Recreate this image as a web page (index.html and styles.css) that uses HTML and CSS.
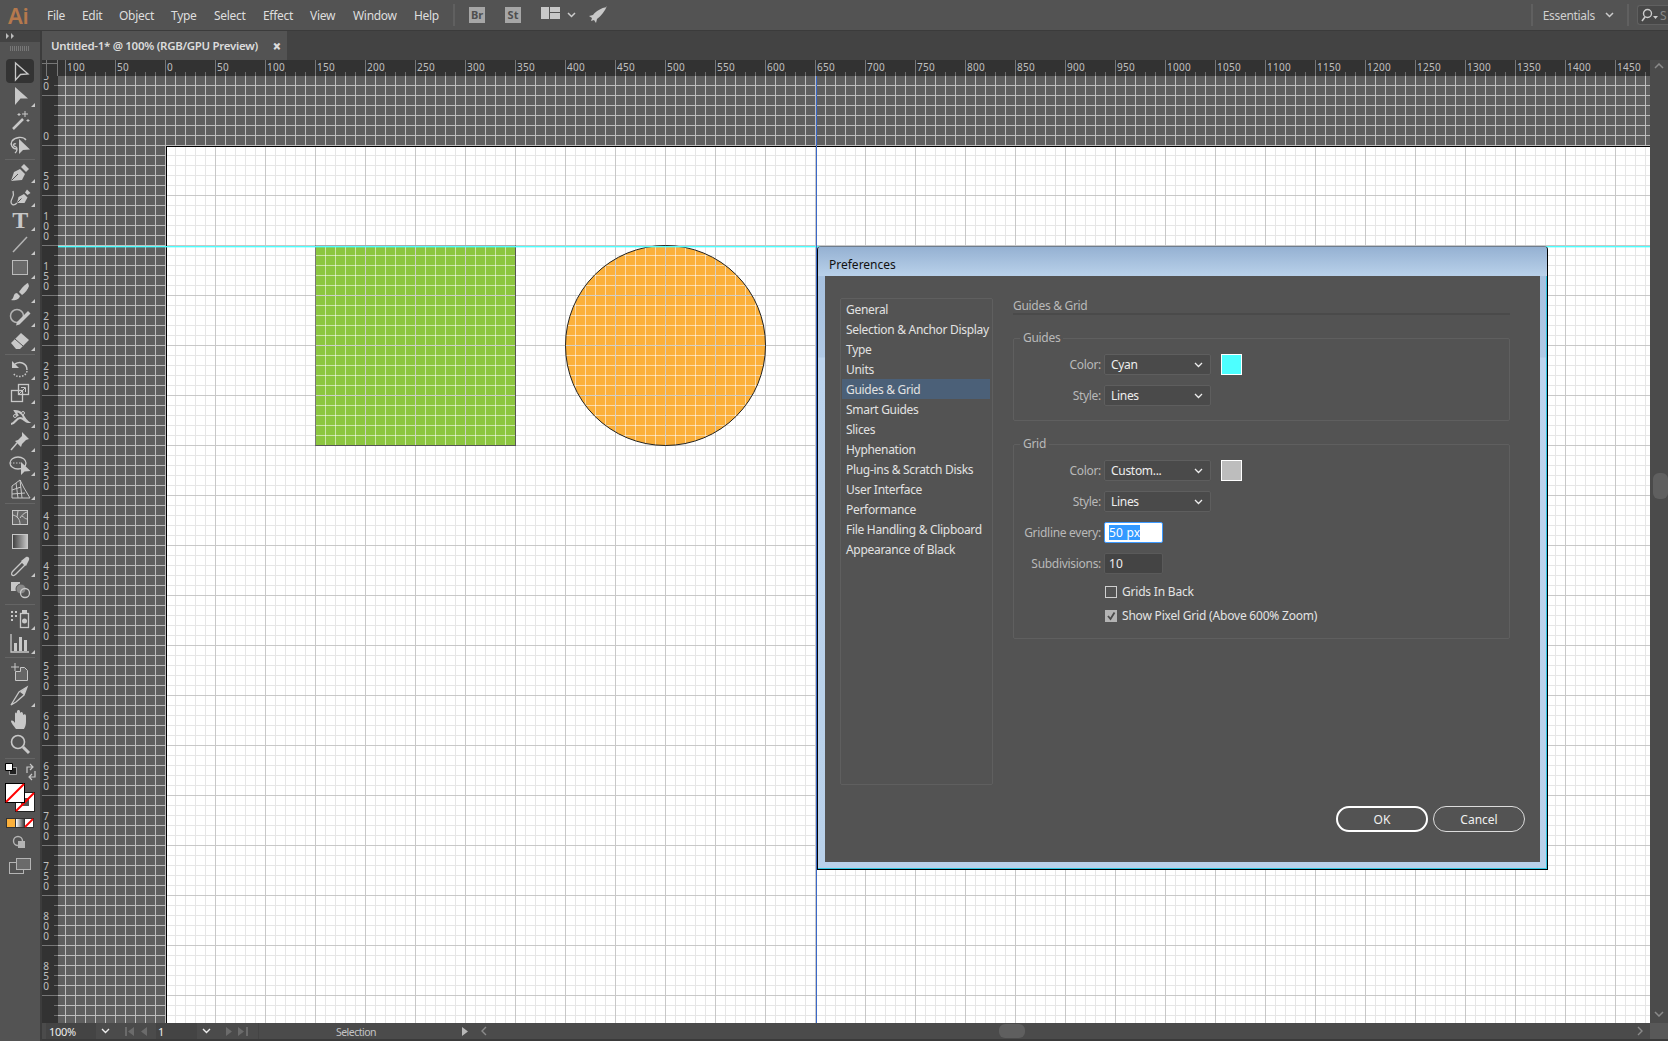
FILE: index.html
```html
<!DOCTYPE html>
<html lang="en">
<head>
    <meta charset="UTF-8">
    <title>Adobe Illustrator - Preferences</title>
    <link rel="stylesheet" href="styles.css">
</head>
<body>
    <div class="menubar">
        <span class="logo">Ai</span>
        <nav class="menu">
            <span class="menu-file">File</span>
            <span class="menu-edit">Edit</span>
            <span class="menu-object">Object</span>
            <span class="menu-type">Type</span>
            <span class="menu-select">Select</span>
            <span class="menu-effect">Effect</span>
            <span class="menu-view">View</span>
            <span class="menu-window">Window</span>
            <span class="menu-help">Help</span>
        </nav>
        <span class="bar-sep"></span>
        <span class="app-badge">Br</span>
        <span class="app-badge">St</span>
        <svg class="layout-icon" width="19" height="12" viewBox="0 0 19 12"><path d="M0 0h8v12H0zM9 0h10v5H9zM9 6h10v6H9z" fill="#c8c8c8"/></svg>
        <svg class="chev bar-chev" width="9" height="6" viewBox="0 0 9 6"><path d="M1 1l3.5 3.5L8 1" fill="none" stroke="#ccc" stroke-width="1.5"/></svg>
        <svg class="rocket" width="20" height="18" viewBox="0 0 20 18"><path d="M19 1C13 2 8 5 5 9l-4 1 3 2-1 3 3-1 2 3 1-4c4-3 8-8 10-13z" fill="#c8c8c8"/></svg>
        <span class="bar-spacer"></span>
        <span class="bar-sep"></span>
        <span class="workspace">Essentials</span>
        <svg class="chev" width="9" height="6" viewBox="0 0 9 6"><path d="M1 1l3.5 3.5L8 1" fill="none" stroke="#ccc" stroke-width="1.5"/></svg>
        <span class="bar-sep sep-search"></span>
        <div class="search">
            <svg width="18" height="14" viewBox="0 0 18 14"><circle cx="7.500" cy="5.500" r="4" fill="none" stroke="#ccc" stroke-width="1.400"/><path d="M5 9l-3 4" stroke="#ccc" stroke-width="1.500"/><path d="M13 8h5l-2.500 3z" fill="#ccc"/></svg>
            <span>S</span>
        </div>
    </div>

    <div class="main">
        <aside class="toolbar">
            <div class="toolbar-head">
                <svg width="9" height="6" viewBox="0 0 9 6"><path d="M0 0l3 3-3 3zM5 0l3 3-3 3z" fill="#bbb"/></svg>
            </div>
            <div class="toolbar-grip"></div>

            <div class="tool-group group-a">
                <div class="tool active"><svg width="24" height="24" viewBox="0 0 24 24"><path d="M7.500 4v17l5-5.500 7.500-.5z" fill="none" stroke="#c8c8c8" stroke-width="1.300"/></svg></div>
                <div class="tool more"><svg width="24" height="24" viewBox="0 0 24 24"><path d="M7 3v18l5.500-6.500H20z" fill="#c8c8c8"/></svg></div>
                <div class="tool"><svg width="24" height="24" viewBox="0 0 24 24"><path d="M5 21l10-10" stroke="#c8c8c8" stroke-width="2.500"/><path d="M17 3v6M14 6h6M11 5v3M9.500 6.500h3M20 11v3M18.500 12.500h3" stroke="#c8c8c8"/></svg></div>
                <div class="tool"><svg width="24" height="24" viewBox="0 0 24 24"><path d="M9 17C4 17 2 12 4 9c3-4 11-5 14-1" fill="none" stroke="#c8c8c8" stroke-width="1.300"/><path d="M8 12c-2-1-3 1-2 2s3 0 3 3-1 3-2 4" fill="none" stroke="#c8c8c8" stroke-width="1.300"/><path d="M11 7v15l4-4 7-.5z" fill="#c8c8c8"/></svg></div>
            </div>
            <div class="tool-sep sep-tight"></div>

            <div class="tool-group">
                <div class="tool more"><svg width="24" height="24" viewBox="0 0 24 24"><path d="M3 21l3-9 6-3 5 5-3 6z" fill="#c8c8c8"/><path d="M3.500 20.500L10 14" stroke="#535353"/><path d="M13 7l3-3 5 5-3 3z" fill="#c8c8c8"/></svg></div>
                <div class="tool more"><svg width="24" height="24" viewBox="0 0 24 24"><path d="M9 19l1.500-6 5.500-3 3.500 3.500-3 5.500z" fill="#c8c8c8"/><path d="M9.500 18.500l4-4" stroke="#535353"/><path d="M17 8.500l2-3 3.500 3.500-3 2z" fill="#c8c8c8"/><path d="M9 19c-3 3-6 2-6-1 0-4 4-5 2-11" fill="none" stroke="#c8c8c8" stroke-width="1.300"/></svg></div>
                <div class="tool more"><span class="tool-type">T</span></div>
                <div class="tool more"><svg width="24" height="24" viewBox="0 0 24 24"><path d="M5 20L19 5" stroke="#b4b4b4" stroke-width="1.500"/></svg></div>
                <div class="tool more"><svg width="24" height="24" viewBox="0 0 24 24"><rect x="4.500" y="4.500" width="15" height="14" fill="#696969" stroke="#bbb"/></svg></div>
                <div class="tool more"><svg width="24" height="24" viewBox="0 0 24 24"><path d="M20 3c-3 1-7 6-9 9l3 3c3-2 6-6 7-9z" fill="#c8c8c8"/><path d="M9 13c-3 0-3 3-4 5-.5 1-2 2-2 2 3 1 8 0 9-4z" fill="#c8c8c8"/></svg></div>
                <div class="tool more"><svg width="24" height="24" viewBox="0 0 24 24"><circle cx="9" cy="12" r="6.500" fill="none" stroke="#b4b4b4" stroke-width="1.500"/><path d="M9 18L20 7l2.500 2.500-11 11-3.500 1z" fill="#c8c8c8"/></svg></div>
                <div class="tool more"><svg width="24" height="24" viewBox="0 0 24 24"><path d="M3 15L13 5l8 7-9 9H8z" fill="#c8c8c8"/><path d="M7 11l8 7" stroke="#535353"/></svg></div>
            </div>
            <div class="tool-sep"></div>

            <div class="tool-group">
                <div class="tool more"><svg width="24" height="24" viewBox="0 0 24 24"><path d="M7 7c5-3 12-1 12 6" fill="none" stroke="#c8c8c8" stroke-width="1.500"/><path d="M19 14c-1 6-10 8-14 2" fill="none" stroke="#c8c8c8" stroke-width="1.500" stroke-dasharray="1.500 1.500"/><path d="M4 4v7h7z" fill="#c8c8c8"/></svg></div>
                <div class="tool more"><svg width="24" height="24" viewBox="0 0 24 24"><rect x="3.500" y="9.500" width="11" height="11" fill="none" stroke="#c8c8c8" stroke-width="1.300"/><rect x="10.500" y="3.500" width="10" height="10" fill="none" stroke="#c8c8c8" stroke-width="1.300"/><path d="M11 13l6-6M13 6.500h4.500V11" fill="none" stroke="#c8c8c8"/></svg></div>
                <div class="tool more"><svg width="24" height="24" viewBox="0 0 24 24"><path d="M3 19c4 0 5-6 9-6s5 4 8 4c-3-2-4-5-6-8-2-2-5-3-7-3l3 5" fill="none" stroke="#c8c8c8" stroke-width="2"/><circle cx="7" cy="11" r="1.500" fill="#535353" stroke="#c8c8c8"/><circle cx="15" cy="8" r="1.500" fill="#535353" stroke="#c8c8c8"/></svg></div>
                <div class="tool more"><svg width="24" height="24" viewBox="0 0 24 24"><path d="M14 3l7 7-3 1-4 4-1 3-6-6 3-1 4-4z" fill="#c8c8c8"/><path d="M9 14l-6 7" stroke="#c8c8c8" stroke-width="1.500"/></svg></div>
                <div class="tool more"><svg width="24" height="24" viewBox="0 0 24 24"><ellipse cx="10" cy="10" rx="8" ry="6" fill="none" stroke="#c8c8c8" stroke-width="1.300"/><path d="M2 10h12" stroke="#c8c8c8" stroke-dasharray="1.500 1.500"/><path d="M13 9v13l3.500-3.500 6-.5z" fill="#c8c8c8"/></svg></div>
                <div class="tool more"><svg width="24" height="24" viewBox="0 0 24 24"><path d="M4 21V9l8-6 4 8 6 10zM4 13l9-3M4 17l13-1M8 6l2 15M12 3l2 18" fill="none" stroke="#c8c8c8"/></svg></div>
            </div>
            <div class="tool-sep"></div>

            <div class="tool-group">
                <div class="tool"><svg width="24" height="24" viewBox="0 0 24 24"><rect x="4.500" y="4.500" width="15" height="14" fill="#666" stroke="#c8c8c8"/><path d="M12 18c0-5-3-8-7-9M12 12c2-3 4-5 7-6M9 11c0-2 1-4 1-6M14 10c2 1 3 3 5 3" fill="none" stroke="#c8c8c8"/></svg></div>
                <div class="tool"><svg width="24" height="24" viewBox="0 0 24 24"><defs><linearGradient id="toolGradient"><stop offset="0" stop-color="#3d3d3d"/><stop offset="1" stop-color="#c8c8c8"/></linearGradient></defs><rect x="4.500" y="4.500" width="15" height="14" fill="url(#toolGradient)" stroke="#c8c8c8"/></svg></div>
                <div class="tool more"><svg width="24" height="24" viewBox="0 0 24 24"><path d="M14 8l3 3-9 9c-1 1-3 2-4 1s0-3 1-4z" fill="none" stroke="#c8c8c8" stroke-width="1.300"/><path d="M13 7l5-4c2-1 4 1 3 3l-3 6z" fill="#c8c8c8"/></svg></div>
                <div class="tool"><svg width="24" height="24" viewBox="0 0 24 24"><rect x="3" y="4" width="9" height="9" fill="#c8c8c8"/><circle cx="13" cy="11" r="5" fill="#888" stroke="#535353"/><circle cx="17" cy="15" r="4.500" fill="none" stroke="#c8c8c8" stroke-width="1.300"/></svg></div>
            </div>
            <div class="tool-sep"></div>

            <div class="tool-group">
                <div class="tool more"><svg width="24" height="24" viewBox="0 0 24 24"><path d="M3 4h2v2H3zM7 4h2v2H7zM3 8h2v2H3zM7 8h2v2H7zM3 12h2v2H3z" fill="#c8c8c8"/><rect x="12.500" y="6.500" width="8" height="14" fill="none" stroke="#c8c8c8" stroke-width="1.300"/><path d="M14 3h5v3h-5z" fill="#c8c8c8"/><circle cx="16.500" cy="14" r="2.500" fill="#c8c8c8"/></svg></div>
                <div class="tool more"><svg width="24" height="24" viewBox="0 0 24 24"><path d="M3 3v18h18" fill="none" stroke="#c8c8c8" stroke-width="1.300"/><path d="M6 12h3v8H6zM11 6h3v14h-3zM16 9h3v11h-3z" fill="#c8c8c8"/></svg></div>
            </div>
            <div class="tool-sep"></div>

            <div class="tool-group">
                <div class="tool"><svg width="24" height="24" viewBox="0 0 24 24"><path d="M3 7h8M7 3v8" stroke="#c8c8c8"/><path d="M7.500 11.500h5v-4h4l3 3v10h-12z" fill="#666" stroke="#c8c8c8"/></svg></div>
                <div class="tool more"><svg width="24" height="24" viewBox="0 0 24 24"><path d="M3 21l8-13 8-5-3 8-8 7z" fill="none" stroke="#c8c8c8" stroke-width="1.300"/><path d="M12 8l7-5-3 8z" fill="#c8c8c8"/></svg></div>
                <div class="tool"><svg width="24" height="24" viewBox="0 0 24 24"><path d="M8 21c-2-3-5-6-5-8 1-1 3 0 4 2V6c0-2 2-2 2 0V3.500c0-2 3-2 3 0V5c1-2 3-1 3 1v1c1-1 3-1 3 1v6c0 3-1 5-2 7z" fill="#c8c8c8"/></svg></div>
                <div class="tool"><svg width="24" height="24" viewBox="0 0 24 24"><circle cx="10" cy="10" r="6.500" fill="none" stroke="#c8c8c8" stroke-width="1.600"/><path d="M15 15l6 6" stroke="#c8c8c8" stroke-width="3"/></svg></div>
            </div>
            <div class="tool-sep"></div>

            <div class="color-widget">
                <svg width="38" height="52" viewBox="0 0 38 52">
                    <path d="M9.500 6.500h7v7h-7z" fill="#222" stroke="#ccc" stroke-width=".7"/>
                    <path d="M5.500 2.500h7v7h-7z" fill="#fff" stroke="#000"/>
                    <path d="M27 12V6h6M30 3l3 3-3 3M35 10v6h-5M32 13l-3 3 3 3" fill="none" stroke="#c8c8c8" stroke-width="1.200"/>
                    <rect x="15.500" y="31.500" width="19" height="19" fill="#fff" stroke="#222"/>
                    <rect x="21" y="37" width="8" height="8" fill="#535353"/>
                    <path d="M16 50l18-18" stroke="#f00" stroke-width="2"/>
                    <rect x="5.500" y="22.500" width="19" height="19" fill="#fff" stroke="#000"/>
                    <path d="M6 41l18-18" stroke="#f00" stroke-width="2"/>
                </svg>
                <svg class="swatch-row" width="38" height="11" viewBox="0 0 38 11">
                    <defs><linearGradient id="swatchGradient"><stop offset="0" stop-color="#fff"/><stop offset="1" stop-color="#444"/></linearGradient></defs>
                    <rect x="6.500" y="1.500" width="27" height="9" fill="#333" stroke="#333"/>
                    <rect x="7" y="2" width="8" height="8" fill="#fbb03b"/>
                    <rect x="16" y="2" width="8" height="8" fill="url(#swatchGradient)"/>
                    <rect x="25" y="2" width="8" height="8" fill="#fff"/>
                    <path d="M25 10l8-8" stroke="#f00" stroke-width="1.800"/>
                </svg>
                <svg class="mode-icon" width="24" height="16" viewBox="0 0 24 16"><circle cx="10" cy="7" r="4.500" fill="none" stroke="#b4b4b4" stroke-width="1.400"/><rect x="10" y="7" width="7" height="7" fill="#b4b4b4"/></svg>
                <svg class="mode-icon screen-icon" width="24" height="16" viewBox="0 0 24 16"><rect x="1.500" y="4.500" width="14" height="11" fill="#535353" stroke="#b4b4b4"/><rect x="8.500" y=".5" width="14" height="11" fill="#6a6a6a" stroke="#b4b4b4"/></svg>
            </div>
        </aside>

        <div class="document">
            <div class="tabrow">
                <div class="doc-tab">
                    <span>Untitled-1* @ 100% (RGB/GPU Preview)</span>
                    <b class="doc-close">×</b>
                </div>
            </div>

            <div class="ruler-row">
                <div class="ruler-corner"></div>
                <div class="hruler">
                    <span>100</span><span>50</span><span>0</span><span>50</span><span>100</span><span>150</span><span>200</span><span>250</span>
                    <span>300</span><span>350</span><span>400</span><span>450</span><span>500</span><span>550</span><span>600</span><span>650</span>
                    <span>700</span><span>750</span><span>800</span><span>850</span><span>900</span><span>950</span><span>1000</span><span>1050</span>
                    <span>1100</span><span>1150</span><span>1200</span><span>1250</span><span>1300</span><span>1350</span><span>1400</span><span>1450</span>
                </div>
                <div class="scroll-cap">
                    <svg width="10" height="6" viewBox="0 0 10 6"><path d="M1 5l4-4 4 4" fill="none" stroke="#8a8a8a" stroke-width="1.500"/></svg>
                </div>
            </div>

            <div class="canvas-row">
                <div class="vruler">
                    <div class="vcell vcell-first"><span>50</span></div>
                    <div class="vcell"><span>0</span></div>
                    <div class="vcell"><span>50</span></div>
                    <div class="vcell"><span>100</span></div>
                    <div class="vcell"><span>150</span></div>
                    <div class="vcell"><span>200</span></div>
                    <div class="vcell"><span>250</span></div>
                    <div class="vcell"><span>300</span></div>
                    <div class="vcell"><span>350</span></div>
                    <div class="vcell"><span>400</span></div>
                    <div class="vcell"><span>450</span></div>
                    <div class="vcell"><span>500</span></div>
                    <div class="vcell"><span>550</span></div>
                    <div class="vcell"><span>600</span></div>
                    <div class="vcell"><span>650</span></div>
                    <div class="vcell"><span>700</span></div>
                    <div class="vcell"><span>750</span></div>
                    <div class="vcell"><span>800</span></div>
                    <div class="vcell"><span>850</span></div>
                    <div class="vcell"></div>
                </div>

                <div class="canvas">
                    <div class="artboard"></div>
                    <div class="shape square"></div>
                    <div class="shape circle"></div>
                    <div class="guide-h"></div>
                    <div class="guide-v"></div>

                    <div class="dialog">
                        <div class="dialog-title">Preferences</div>
                        <div class="dialog-body">
                            <div class="dialog-main">
                                <ul class="pref-list">
                                    <li>General</li>
                                    <li>Selection &amp; Anchor Display</li>
                                    <li>Type</li>
                                    <li>Units</li>
                                    <li class="selected">Guides &amp; Grid</li>
                                    <li>Smart Guides</li>
                                    <li>Slices</li>
                                    <li>Hyphenation</li>
                                    <li>Plug-ins &amp; Scratch Disks</li>
                                    <li>User Interface</li>
                                    <li>Performance</li>
                                    <li>File Handling &amp; Clipboard</li>
                                    <li>Appearance of Black</li>
                                </ul>
                                <div class="pref-panel">
                                    <div class="panel-title">Guides &amp; Grid</div>

                                    <fieldset class="group">
                                        <legend>Guides</legend>
                                        <div class="row">
                                            <label>Color:</label>
                                            <div class="select"><span>Cyan</span><svg width="9" height="6" viewBox="0 0 9 6"><path d="M1 1l3.500 3.500L8 1" fill="none" stroke="#eee" stroke-width="1.300"/></svg></div>
                                            <div class="color-chip chip-cyan"></div>
                                        </div>
                                        <div class="row">
                                            <label>Style:</label>
                                            <div class="select"><span>Lines</span><svg width="9" height="6" viewBox="0 0 9 6"><path d="M1 1l3.500 3.500L8 1" fill="none" stroke="#eee" stroke-width="1.300"/></svg></div>
                                        </div>
                                    </fieldset>

                                    <fieldset class="group group-grid">
                                        <legend>Grid</legend>
                                        <div class="row">
                                            <label>Color:</label>
                                            <div class="select"><span>Custom...</span><svg width="9" height="6" viewBox="0 0 9 6"><path d="M1 1l3.500 3.500L8 1" fill="none" stroke="#eee" stroke-width="1.300"/></svg></div>
                                            <div class="color-chip chip-gray"></div>
                                        </div>
                                        <div class="row">
                                            <label>Style:</label>
                                            <div class="select"><span>Lines</span><svg width="9" height="6" viewBox="0 0 9 6"><path d="M1 1l3.500 3.500L8 1" fill="none" stroke="#eee" stroke-width="1.300"/></svg></div>
                                        </div>
                                        <div class="row">
                                            <label>Gridline every:</label>
                                            <div class="field field-focus"><mark>50 px</mark></div>
                                        </div>
                                        <div class="row">
                                            <label>Subdivisions:</label>
                                            <div class="field">10</div>
                                        </div>
                                        <div class="check-row first-check">
                                            <span class="checkbox"></span>
                                            <span>Grids In Back</span>
                                        </div>
                                        <div class="check-row second-check">
                                            <span class="checkbox checked"><svg width="10" height="10" viewBox="0 0 10 10"><path d="M2 5l2.500 3L8.500 1.500" fill="none" stroke="#4a4a4a" stroke-width="1.800"/></svg></span>
                                            <span>Show Pixel Grid (Above 600% Zoom)</span>
                                        </div>
                                    </fieldset>
                                </div>
                            </div>
                            <div class="dialog-buttons">
                                <button class="btn btn-default">OK</button>
                                <button class="btn">Cancel</button>
                            </div>
                        </div>
                    </div>
                </div>

                <div class="vscroll">
                    <div class="vthumb"></div>
                    <svg width="10" height="6" viewBox="0 0 10 6"><path d="M1 1l4 4 4-4" fill="none" stroke="#8a8a8a" stroke-width="1.500"/></svg>
                </div>
            </div>

            <div class="statusbar">
                <div class="st-field st-zoom">100%</div>
                <div class="st-drop"><svg width="9" height="6" viewBox="0 0 9 6"><path d="M1 1l3.500 3.500L8 1" fill="none" stroke="#eee" stroke-width="1.400"/></svg></div>
                <div class="st-nav">
                    <svg width="10" height="9" viewBox="0 0 10 9"><path d="M0 0h2v9H0zM9 0v9L3 4.500z" fill="#6b6b6b"/></svg>
                    <svg width="6" height="9" viewBox="0 0 6 9"><path d="M6 0v9L0 4.500z" fill="#6b6b6b"/></svg>
                </div>
                <div class="st-field st-page">1</div>
                <div class="st-drop"><svg width="9" height="6" viewBox="0 0 9 6"><path d="M1 1l3.500 3.500L8 1" fill="none" stroke="#eee" stroke-width="1.400"/></svg></div>
                <div class="st-nav">
                    <svg width="6" height="9" viewBox="0 0 6 9"><path d="M0 0v9l6-4.500z" fill="#6b6b6b"/></svg>
                    <svg width="10" height="9" viewBox="0 0 10 9"><path d="M0 0v9l6-4.500zM8 0h2v9H8z" fill="#6b6b6b"/></svg>
                </div>
                <div class="st-text">Selection</div>
                <svg class="st-play" width="6" height="9" viewBox="0 0 6 9"><path d="M0 0v9l6-4.500z" fill="#b8b8b8"/></svg>
                <div class="hscroll">
                    <svg width="6" height="10" viewBox="0 0 6 10"><path d="M5 1L1 5l4 4" fill="none" stroke="#8a8a8a" stroke-width="1.400"/></svg>
                    <div class="hthumb"></div>
                    <svg class="hscroll-end" width="6" height="10" viewBox="0 0 6 10"><path d="M1 1l4 4-4 4" fill="none" stroke="#8a8a8a" stroke-width="1.400"/></svg>
                </div>
                <div class="scroll-corner"></div>
            </div>
        </div>
    </div>
</body>
</html>
```

FILE: styles.css
```css
* {
    box-sizing: border-box;
}

html, body {
    margin: 0;
    padding: 0;
}

body {
    width: 1668px;
    height: 1041px;
    overflow: hidden;
    display: flex;
    flex-direction: column;
    background-color: #535353;
    color: #dcdcdc;
    font-family: "Noto Sans", "Open Sans", sans-serif;
    font-size: 12px;
    letter-spacing: -.3px;
}

/* top menu */

.menubar {
    height: 31px;
    flex: none;
    display: flex;
    align-items: center;
    background-color: #535353;
    border-bottom: 1px solid #3b3b3b;
}

.logo {
    width: 47px;
    padding-left: 8px;
    font-size: 22px;
    font-weight: 600;
    color: #b5794d;
}

.menu {
    display: flex;
    width: 396px;
    color: #dedede;
}

.menu-file { width: 35px; }
.menu-edit { width: 37px; }
.menu-object { width: 52px; }
.menu-type { width: 43px; }
.menu-select { width: 49px; }
.menu-effect { width: 47px; }
.menu-view { width: 43px; }
.menu-window { width: 61px; }
.menu-help { width: 29px; }

.bar-sep {
    width: 2px;
    height: 22px;
    background-color: #606060;
    margin-left: 10px;
    margin-right: 14px;
}

.app-badge {
    width: 16px;
    height: 16px;
    margin-right: 20px;
    background-color: #a6a6a6;
    color: #4f4f4f;
    font-size: 11px;
    font-weight: 700;
    line-height: 16px;
    text-align: center;
    letter-spacing: 0;
}

.layout-icon {
    margin-top: -4px;
}

.bar-chev {
    margin-left: 7px;
    margin-right: 12px;
}

.bar-spacer {
    flex: 1;
}

.workspace {
    margin-right: 10px;
    color: #d0d0d0;
    margin-left: -4px;
}

.sep-search {
    margin-left: 13px;
    margin-right: 8px;
}

.search {
    width: 31px;
    height: 20px;
    display: flex;
    align-items: center;
    gap: 2px;
    padding-left: 2px;
    background-color: #484848;
    border: 1px solid #606060;
    border-right: none;
    border-radius: 3px 0 0 3px;
    color: #888;
    overflow: hidden;
}

/* tools column */

.main {
    flex: 1;
    display: flex;
    min-height: 0;
}

.toolbar {
    width: 42px;
    flex: none;
    background-color: #535353;
    border-right: 2px solid #3c3c3c;
}

.toolbar-head {
    height: 11px;
    padding-left: 6px;
    background-color: #434343;
    line-height: 8px;
}

.toolbar-grip {
    width: 20px;
    height: 5px;
    margin: 4px 0 8px 10px;
    background: repeating-linear-gradient(to right, #777 0, #777 1px, transparent 1px, transparent 2px);
}

.tool-group {
    display: flex;
    flex-direction: column;
}

.group-a .tool {
    height: 24.4px;
}

.tool {
    position: relative;
    height: 24px;
    width: 28px;
    margin-left: 6px;
    display: flex;
    align-items: center;
    justify-content: center;
    border-radius: 4px;
}

.tool.active {
    background-color: #333333;
}

.tool.more::after {
    content: "";
    position: absolute;
    right: -1px;
    bottom: 1px;
    border-left: 4px solid transparent;
    border-bottom: 4px solid #c8c8c8;
}

.tool-type {
    font-family: "Liberation Serif", serif;
    font-size: 24px;
    font-weight: 700;
    line-height: 24px;
    color: #c8c8c8;
}

.tool-sep {
    height: 1px;
    margin: 2px 5px 2px 5px;
    background-color: #656565;
}

.sep-tight {
    margin-bottom: 0;
}

.color-widget {
    display: flex;
    flex-direction: column;
}

.swatch-row {
    display: block;
    margin-top: 4px;
}

.mode-icon {
    margin: 6px 0 0 8px;
}

.screen-icon {
    margin-top: 8px;
}

/* document area */

.document {
    flex: 1;
    min-width: 0;
    display: flex;
    flex-direction: column;
}

.tabrow {
    height: 29px;
    flex: none;
    background-color: #434343;
}

.doc-tab {
    width: 245px;
    height: 29px;
    padding: 0 6px 0 9px;
    display: flex;
    align-items: center;
    background-color: #535353;
    font-weight: 600;
    font-size: 11.500px;
    color: #dcdcdc;
    white-space: nowrap;
}

.doc-close {
    margin-left: auto;
    font-size: 15px;
}

.ruler-row {
    height: 16px;
    flex: none;
    display: flex;
    background-color: #323232;
}

.ruler-corner {
    width: 16px;
    flex: none;
    background:
        linear-gradient(#777, #777) 0 3px / 16px 1px no-repeat,
        linear-gradient(#777, #777) 4px 0 / 1px 16px no-repeat,
        linear-gradient(#777, #777) 15px 0 / 1px 16px no-repeat;
}

.hruler {
    flex: 1;
    display: flex;
    padding-left: 7px;
    overflow: hidden;
}

.hruler span {
    width: 50px;
    flex: none;
    height: 16px;
    padding-left: 1px;
    border-left: 1px solid #777;
    font-size: 10px;
    line-height: 15px;
    letter-spacing: .3px;
    color: #c0c0c0;
    background: linear-gradient(to right, #6a6a6a 1px, transparent 1px) 9px 100% / 10px 4px repeat-x;
}

.scroll-cap {
    width: 18px;
    flex: none;
    padding: 3px 0 0 4px;
    background-color: #4b4b4b;
}

.scroll-cap svg {
    display: block;
}

.canvas-row {
    height: 947px;
    flex: none;
    display: flex;
}

.vruler {
    width: 16px;
    flex: none;
    overflow: hidden;
    background-color: #323232;
}

.vcell {
    height: 50px;
    display: flex;
    flex-direction: column;
    justify-content: flex-end;
    padding: 0 0 4px 0;
    border-bottom: 1px solid #777;
    background: linear-gradient(to bottom, #6a6a6a 1px, transparent 1px) 100% 9px / 4px 10px repeat-y;
}

.vcell-first {
    height: 20px;
    overflow: hidden;
}

.vcell span {
    display: block;
    flex: none;
    width: 8px;
    font-size: 10px;
    line-height: 10px;
    letter-spacing: 0;
    word-break: break-all;
    text-align: center;
    color: #c0c0c0;
}

.canvas {
    position: relative;
    flex: 1;
    overflow: hidden;
    background-color: #5f5f5f;
    background-image:
        linear-gradient(to right, #bdbdbd 1px, transparent 1px),
        linear-gradient(to bottom, #bdbdbd 1px, transparent 1px);
    background-size: 10px 10px;
    background-position: 7px 9px;
}

/* black edge sits one pixel inside the grid origin */
.artboard {
    position: absolute;
    left: 108px;
    top: 70px;
    right: 0;
    bottom: 0;
    border-left: 1px solid #000;
    border-top: 1px solid #000;
    background-color: #fff;
    background-image:
        linear-gradient(to right, #c8c8c8 1px, transparent 1px),
        linear-gradient(to bottom, #c8c8c8 1px, transparent 1px),
        linear-gradient(to right, #e6e6e6 1px, transparent 1px),
        linear-gradient(to bottom, #e6e6e6 1px, transparent 1px);
    background-size: 50px 50px, 50px 50px, 10px 10px, 10px 10px;
    background-origin: border-box;
    background-position: -1px -1px;
}

.shape {
    position: absolute;
    top: 169px;
    width: 201px;
    height: 201px;
    background-image:
        linear-gradient(to right, rgba(205, 205, 205, .85) 1px, transparent 1px),
        linear-gradient(to bottom, rgba(205, 205, 205, .85) 1px, transparent 1px),
        linear-gradient(to right, rgba(255, 255, 255, .55) 1px, transparent 1px),
        linear-gradient(to bottom, rgba(255, 255, 255, .55) 1px, transparent 1px);
    background-size: 50px 50px, 50px 50px, 10px 10px, 10px 10px;
    background-origin: border-box;
}

.square {
    left: 257px;
    background-color: #8cc63f;
    border: 1px solid #777;
    border-top-color: #aaa;
    border-right-color: #555;
    border-bottom-color: #555;
}

.circle {
    left: 507px;
    border: 1px solid #222;
    border-radius: 50%;
    background-color: #fbb03b;
}

.guide-h {
    position: absolute;
    left: 0;
    right: 0;
    top: 170px;
    height: 1px;
    background-color: #4dffff;
    box-shadow: 0 1px 0 rgba(77, 255, 255, .35);
}

.guide-v {
    position: absolute;
    top: 0;
    bottom: 0;
    left: 758px;
    width: 1px;
    background-color: #3a68c8;
}

/* preferences dialog */

.dialog {
    position: absolute;
    left: 759px;
    top: 170px;
    width: 731px;
    height: 624px;
    display: flex;
    flex-direction: column;
    padding: 0 7px 7px 7px;
    border: 1px solid #000;
    border-top-color: #6e7c8c;
    border-radius: 4px 4px 0 0;
    background: linear-gradient(to bottom, #a3bedd 0, #b0c9e5 110px, #bcd4ee 111px, #b9d1ea 100%);
    box-shadow: inset -1px -1px 0 #2fc4e0;
    color: #e4e4e4;
}

.dialog-title {
    height: 29px;
    flex: none;
    margin: 0 -7px;
    padding: 10px 0 0 11px;
    background: linear-gradient(to bottom, #95b1d2, #b9d1ea);
    color: #111;
    line-height: 16px;
    border-radius: 3px 3px 0 0;
    letter-spacing: 0;
}

.dialog-body {
    flex: 1;
    padding: 22px 15px 0 15px;
    background-color: #535353;
}

.dialog-main {
    display: flex;
    height: 487px;
}

.pref-list {
    width: 153px;
    flex: none;
    margin: 0;
    padding: 0 1px;
    list-style: none;
    border: 1px solid #5f5f5f;
    border-radius: 2px;
}

.pref-list li {
    height: 20px;
    padding-left: 4px;
    line-height: 21px;
    white-space: nowrap;
    color: #e2e2e2;
}

.pref-list .selected {
    background-color: #4b6078;
    margin-right: 1px;
}

.pref-panel {
    width: 497px;
    margin-left: 20px;
}

.panel-title {
    height: 17px;
    line-height: 15px;
    border-bottom: 2px solid #4a4a4a;
    color: #b9b9b9;
}

.group {
    margin: 15px 0 0 0;
    padding: 0 0 14px 0;
    min-width: 0;
    border: 1px solid #5f5f5f;
    border-radius: 2px;
    display: flex;
    flex-direction: column;
    gap: 10px;
}

.group-grid {
    padding-bottom: 16px;
}

.group legend {
    margin-left: 6px;
    padding: 0 3px;
    height: 16px;
    line-height: 16px;
    color: #b9b9b9;
}

.row {
    height: 21px;
    display: flex;
    align-items: center;
}

.group .row:first-of-type {
    margin-top: 8px;
}

.row label {
    width: 87px;
    margin-right: 3px;
    text-align: right;
    white-space: nowrap;
    color: #b9b9b9;
}

.select {
    width: 107px;
    height: 21px;
    display: flex;
    align-items: center;
    justify-content: space-between;
    padding: 0 7px 0 6px;
    background-color: #4a4a4a;
    border: 1px solid #5e5e5e;
    border-radius: 2px;
    color: #eee;
}

.color-chip {
    width: 21px;
    height: 21px;
    margin-left: 10px;
    border: 1px solid #fff;
}

.chip-cyan {
    background-color: #4dffff;
}

.chip-gray {
    background-color: #bdbdbd;
}

.field {
    width: 59px;
    height: 21px;
    padding-left: 4px;
    background-color: #444;
    border: 1px solid #5a5a5a;
    border-radius: 2px;
    line-height: 19px;
    color: #eee;
    letter-spacing: .2px;
}

.field-focus {
    background-color: #fff;
    border-color: #3d9aff;
}

.field-focus mark {
    display: inline-block;
    height: 15px;
    line-height: 15px;
    background-color: #3399ff;
    color: #fff;
}

.check-row {
    height: 13px;
    display: flex;
    align-items: center;
    gap: 5px;
    margin-left: 91px;
    white-space: nowrap;
    letter-spacing: -.2px;
    color: #e4e4e4;
}

.first-check {
    margin-top: 1px;
}

.second-check {
    margin-top: 1px;
}

.checkbox {
    width: 12px;
    height: 12px;
    flex: none;
    border: 1px solid #cfcfcf;
}

.checkbox.checked {
    background-color: #b4b4b4;
    border-color: #b4b4b4;
}

.checkbox svg {
    display: block;
}

.dialog-buttons {
    display: flex;
    justify-content: flex-end;
    gap: 5px;
    margin-top: 21px;
}

.btn {
    width: 92px;
    height: 26px;
    padding: 0;
    background: transparent;
    border: 1px solid #dcdcdc;
    border-radius: 13px;
    font: inherit;
    letter-spacing: 0;
    color: #f0f0f0;
}

.btn-default {
    border: 2px solid #fff;
}

/* scrollbars and status */

.vscroll {
    position: relative;
    width: 18px;
    flex: none;
    background-color: #4b4b4b;
}

.vthumb {
    width: 15px;
    height: 26px;
    margin: 397px 0 0 3px;
    background-color: #5f5f5f;
    border-radius: 6px;
}

.vscroll svg {
    position: absolute;
    left: 4px;
    bottom: 6px;
}

.statusbar {
    height: 18px;
    flex: none;
    display: flex;
    align-items: flex-start;
    background-color: #4b4b4b;
    border-bottom: 2px solid #3a3a3a;
    padding-left: 4px;
    font-size: 11px;
}

.st-field {
    height: 16px;
    background-color: #444;
    color: #eee;
    line-height: 18px;
    padding-left: 3px;
}

.st-zoom {
    width: 50px;
}

.st-page {
    width: 41px;
    padding-left: 2px;
}

.st-drop {
    width: 18px;
    height: 16px;
    margin-left: 1px;
    padding: 5px 0 0 4px;
    background-color: #4b4b4b;
}

.st-drop svg {
    display: block;
}

.st-nav {
    width: 41px;
    height: 16px;
    display: flex;
    align-items: center;
    justify-content: center;
    gap: 6px;
}

.st-text {
    width: 195px;
    height: 16px;
    margin-left: 1px;
    border-left: 1px solid #444;
    text-align: center;
    font-size: 10.500px;
    letter-spacing: -.5px;
    line-height: 19px;
    color: #c4c4c4;
}

.st-play {
    margin: 4px 0 0 9px;
}

.hscroll {
    flex: 1;
    height: 16px;
    display: flex;
    align-items: center;
    padding-left: 13px;
    padding-right: 7px;
}

.hthumb {
    width: 26px;
    height: 14px;
    margin-left: 512px;
    background-color: #5f5f5f;
    border-radius: 6px;
}

.hscroll-end {
    margin-left: auto;
}

.scroll-corner {
    width: 18px;
    height: 16px;
    flex: none;
    background-color: #585858;
}
```
